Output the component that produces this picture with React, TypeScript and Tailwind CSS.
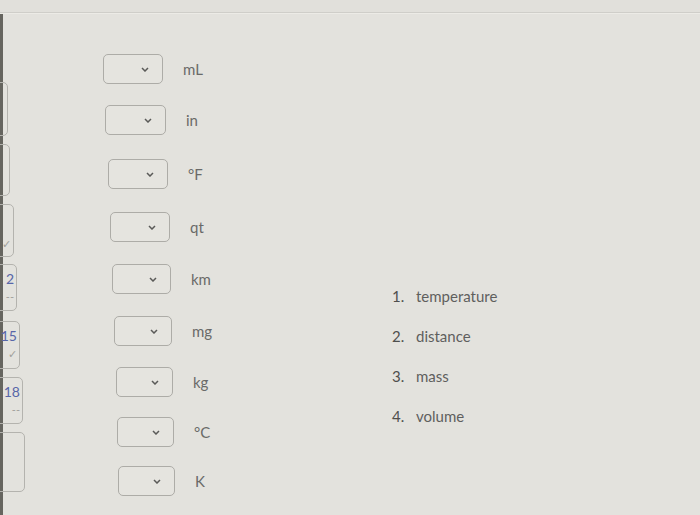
import React from 'react';

const rows = [
  { label: 'mL', cls: 'mt-[40px] ml-[70px]', w: 'w-[60px]' },
  { label: 'in', cls: 'mt-[21px] ml-[72px]', w: 'w-[61px]' },
  { label: '°F', cls: 'mt-[24px] ml-[75px]', w: 'w-[60px]' },
  { label: 'qt', cls: 'mt-[23px] ml-[77px]', w: 'w-[60px]' },
  { label: 'km', cls: 'mt-[22px] ml-[79px]', w: 'w-[59px]' },
  { label: 'mg', cls: 'mt-[22px] ml-[81px]', w: 'w-[58px]' },
  { label: 'kg', cls: 'mt-[21px] ml-[83px]', w: 'w-[57px]' },
  { label: '°C', cls: 'mt-[20px] ml-[84px]', w: 'w-[57px]' },
  { label: 'K', cls: 'mt-[19px] ml-[85px]', w: 'w-[57px]' },
];

const answers = ['temperature', 'distance', 'mass', 'volume'];

function Chevron() {
  return (
    <svg width="8" height="5" viewBox="0 0 8 5" className="ml-auto mr-[13px]">
      <polyline points="1,1 4,4 7,1" fill="none" stroke="#5a5a58" strokeWidth="1.5" />
    </svg>
  );
}

function SideBox({ cls, top, bottom }: { cls: string; top?: string; bottom?: string }) {
  return (
    <div className={`${cls} -ml-[10px] border border-[#b4b3ae] rounded-[5px] flex flex-col items-end pr-[2px] pt-[6px] gap-[4px]`}>
      {top && <span className="text-[14px] leading-[16px] text-[#5866a8]">{top}</span>}
      {bottom && <span className="text-[11px] leading-[12px] text-[#a09f9b]">{bottom}</span>}
    </div>
  );
}

export default function App() {
  return (
    <div
      className="w-[700px] h-[515px] overflow-hidden bg-[#e3e2dd] flex flex-col"
      style={{ fontFamily: 'Lato, "Open Sans", sans-serif' }}
    >
      <div className="h-[13px] shrink-0 bg-[#e1e0db] border-b border-[#cfcec9]" />
      <div className="h-px shrink-0 bg-[#eceBe6]" />
      <div className="flex flex-1">
        <div className="w-[3px] shrink-0 bg-[#66655f]" />
        {/* clipped column at the left edge */}
        <div className="w-[30px] shrink-0 flex flex-col">
          <SideBox cls="mt-[68px] w-[15px] h-[54px]" />
          <SideBox cls="mt-[8px] w-[17px] h-[52px]" />
          <SideBox cls="mt-[8px] w-[21px] h-[53px] justify-end pb-[6px]" bottom="✓" />
          <SideBox cls="mt-[7px] w-[24px] h-[47px]" top="2" bottom="--" />
          <SideBox cls="mt-[10px] w-[27px] h-[48px]" top="15" bottom="✓" />
          <SideBox cls="mt-[8px] w-[30px] h-[47px]" top="18" bottom="--" />
          <SideBox cls="mt-[8px] w-[32px] h-[60px]" />
        </div>
        <div className="w-[330px] shrink-0 flex flex-col">
          {rows.map((r) => (
            <div key={r.label} className={`${r.cls} flex items-center h-[30px]`}>
              <div className={`${r.w} h-[30px] border border-[#adaca7] rounded-[5px] bg-[#e5e4df] flex items-center`}>
                <Chevron />
              </div>
              <span className="ml-[20px] text-[15px] text-[#6a6a68]">{r.label}</span>
            </div>
          ))}
        </div>
        <div className="flex flex-col pl-[29px] pt-[272px] gap-[20px]">
          {answers.map((a, i) => (
            <div key={a} className="flex h-[20px] items-center text-[15px]">
              <span className="w-[24px] text-[#4f4f4d]">{i + 1}.</span>
              <span className="text-[#5f5f5d]">{a}</span>
            </div>
          ))}
        </div>
      </div>
    </div>
  );
}
